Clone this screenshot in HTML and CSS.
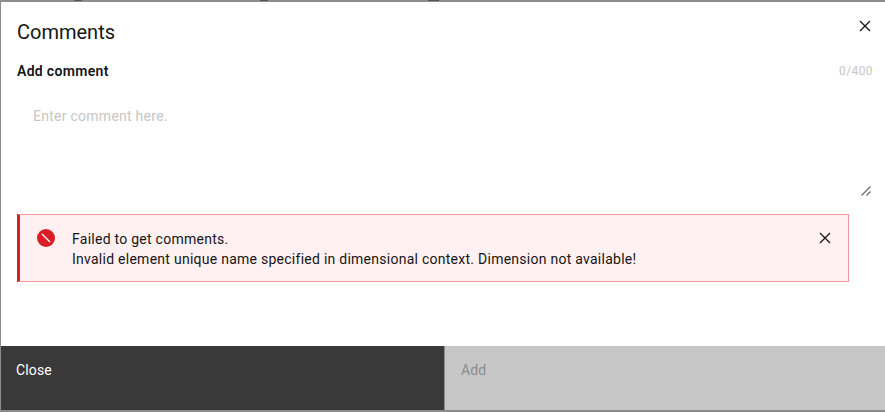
FILE: index.html
```html
<!DOCTYPE html>
<html>
<head>
    <title>Comments</title>
    <meta charset="utf-8">
    <link rel="stylesheet" href="styles.css">
</head>
<body>
    <div class="modal">
        <div class="modal-header">
            <h1>Comments</h1>
            <button class="close-icon" aria-label="Close">
                <svg width="16" height="16" viewBox="0 0 16 16"><path d="M3 3L13 13M13 3L3 13" /></svg>
            </button>
        </div>

        <div class="modal-body">
            <div class="label-row">
                <span class="label">Add comment</span>
                <span class="counter">0/400</span>
            </div>
            <div class="text-area">
                <span class="placeholder">Enter comment here.</span>
                <svg class="grip" width="10" height="10" viewBox="0 0 10 10"><path d="M0.5 9.5L9.5 0.5M5.5 9.5L9.5 5.5" /></svg>
            </div>

            <div class="error">
                <svg class="error-icon" width="18" height="18" viewBox="0 0 18 18">
                    <circle cx="9" cy="9" r="9" />
                    <path d="M5 5L13 13" />
                </svg>
                <div class="error-text">
                    <p>Failed to get comments.</p>
                    <p>Invalid element unique name specified in dimensional context. Dimension not available!</p>
                </div>
                <svg class="error-close" width="16" height="16" viewBox="0 0 16 16"><path d="M3 3L13 13M13 3L3 13" /></svg>
            </div>
        </div>

        <div class="modal-footer">
            <div class="btn btn-close">Close</div>
            <div class="btn btn-add">Add</div>
        </div>
    </div>
</body>
</html>
```

FILE: styles.css
```css
* {
    box-sizing: border-box;
}

html, body {
    height: 100%;
}

body {
    margin: 0;
    padding: 2px 0 2px 1px;
    background-color: #8c8c8c;
    /* bits of the page behind the dialog showing above its top edge */
    background-image:
        linear-gradient(#555555, #555555),
        linear-gradient(#555555, #555555),
        linear-gradient(#555555, #555555);
    background-size: 8px 1px, 8px 1px, 11px 1px;
    background-position: 74px 0, 260px 0, 428px 0;
    background-repeat: no-repeat;
    font-family: Roboto, "Noto Sans", sans-serif;
    color: #161616;
    overflow: hidden;
}

.modal {
    display: flex;
    flex-direction: column;
    height: 100%;
    background-color: white;
}

.modal-header {
    display: flex;
    justify-content: space-between;
    padding: 16px 12px 0 16px;
}

h1 {
    margin: 0;
    font-size: 20px;
    font-weight: 400;
    line-height: 28px;
}

.close-icon {
    width: 16px;
    height: 16px;
    padding: 0;
    border: none;
    background: none;
}

.close-icon path, .error-close path {
    fill: none;
    stroke: #161616;
    stroke-width: 1.3;
}

.modal-body {
    flex: 1;
    padding: 13px 0 0 16px;
}

.label-row {
    display: flex;
    justify-content: space-between;
    align-items: center;
    padding-right: 12px;
    height: 24px;
}

.label {
    font-size: 14px;
    font-weight: 600;
    letter-spacing: 0.32px;
}

.counter {
    font-size: 12px;
    letter-spacing: 0.4px;
    color: #c6c6c6;
}

.text-area {
    position: relative;
    height: 131px;
    padding: 25px 16px;
    font-size: 14px;
    letter-spacing: 0.26px;
}

.placeholder {
    color: #c6c6c6;
}

.grip {
    position: absolute;
    right: 14px;
    bottom: 18px;
}

.grip path {
    fill: none;
    stroke: #666666;
    stroke-width: 1.2;
}

.error {
    display: flex;
    align-items: flex-start;
    width: 832px;
    height: 68px;
    padding: 14px 15px 0 17px;
    background-color: #fff0f1;
    border: 1px solid #f4949c;
    border-left: 3px solid #da1e28;
}

.error-icon {
    flex: none;
    margin-right: 17px;
}

.error-icon circle {
    fill: #da1e28;
}

.error-icon path {
    stroke: white;
    stroke-width: 1.2;
}

.error-text {
    flex: 1;
    font-size: 14px;
    line-height: 20px;
    letter-spacing: 0.26px;
}

.error-text p {
    margin: 0;
}

.error-close {
    flex: none;
    margin-top: 1px;
}

.modal-footer {
    display: flex;
    height: 64px;
}

.btn {
    padding: 14px 16px;
    font-size: 14px;
    line-height: 20px;
    letter-spacing: 0.16px;
}

.btn-close {
    width: 443px;
    padding-left: 15px;
    background-color: #393939;
    color: white;
}

.btn-add {
    flex: 1;
    background-color: #c6c6c6;
    color: #8d8d8d;
    border-left: 1px solid #8c8c8c;
}
```
